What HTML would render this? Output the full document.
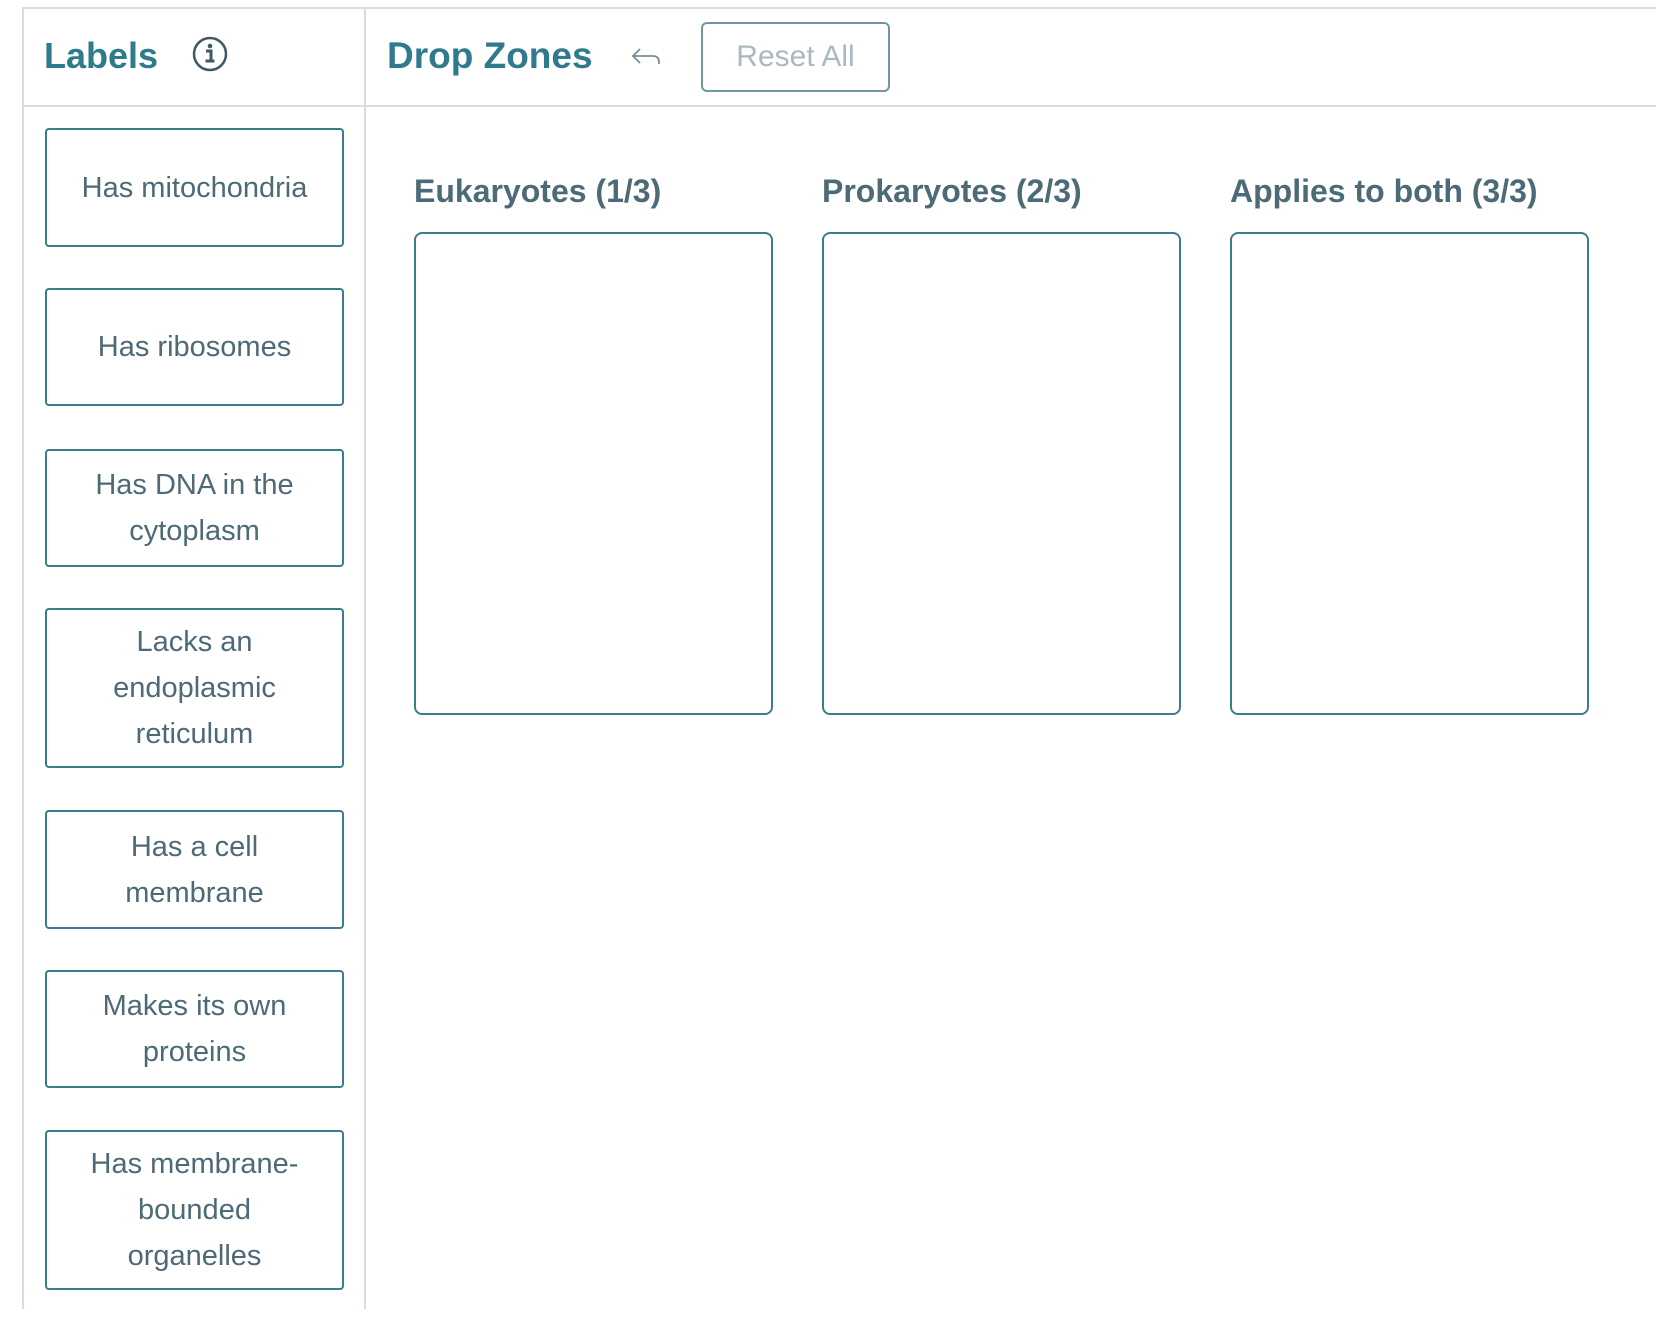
<!DOCTYPE html>
<html><head><meta charset="utf-8"><style>
html,body{margin:0;padding:0;background:#fff;width:1656px;height:1340px;overflow:hidden;font-family:"Liberation Sans",sans-serif;}
.abs{position:absolute;box-sizing:border-box;}
.hl{background:#d5dde2;}
.h1{color:#2f7a8c;font-weight:bold;}
.lab{border:2px solid #3a7d8c;border-radius:4px;color:#4d6a77;font-size:29px;line-height:46px;text-align:center;display:flex;align-items:center;justify-content:center;left:45px;width:299px;}
.zt{color:#4d6a77;font-weight:bold;font-size:32px;top:172px;white-space:nowrap;}
.zone{border:2px solid #3a7d8c;border-radius:8px;top:232px;height:483px;width:359px;}
</style></head><body>
<div class="abs hl" style="left:23px;top:7px;width:1633px;height:2px"></div>
<div class="abs hl" style="left:23px;top:105px;width:1633px;height:2px"></div>
<div class="abs hl" style="left:22px;top:7px;width:2px;height:1302px"></div>
<div class="abs hl" style="left:364px;top:7px;width:2px;height:1302px"></div>

<div class="abs h1" style="left:44px;top:35px;font-size:36px">Labels</div>
<svg class="abs" style="left:191px;top:35px" width="38" height="38" viewBox="0 0 38 38"><circle cx="19" cy="19" r="16" fill="none" stroke="#3d5866" stroke-width="2.5"/><circle cx="19" cy="11" r="2.3" fill="#3d5866"/><path d="M15 16h5v10h3M14.5 26h9" fill="none" stroke="#3d5866" stroke-width="3"/></svg>

<div class="abs h1" style="left:387px;top:35px;font-size:37px">Drop Zones</div>
<svg class="abs" style="left:630px;top:45px" width="34" height="24" viewBox="0 0 34 24"><path d="M10 4L3 11l7 7M3 11h20c4 0 6 2 6 6v2" fill="none" stroke="#7a8e98" stroke-width="1.8"/></svg>
<div class="abs" style="left:701px;top:22px;width:189px;height:70px;border:2px solid #6f97a2;border-radius:6px;color:#a9b9c0;font-size:30px;text-align:center;line-height:66px">Reset All</div>

<div class="abs lab" style="top:128px;height:119px">Has mitochondria</div>
<div class="abs lab" style="top:288px;height:118px">Has ribosomes</div>
<div class="abs lab" style="top:449px;height:118px">Has DNA in the<br>cytoplasm</div>
<div class="abs lab" style="top:608px;height:160px">Lacks an<br>endoplasmic<br>reticulum</div>
<div class="abs lab" style="top:810px;height:119px">Has a cell<br>membrane</div>
<div class="abs lab" style="top:970px;height:118px">Makes its own<br>proteins</div>
<div class="abs lab" style="top:1130px;height:160px">Has membrane-<br>bounded<br>organelles</div>

<div class="abs zt" style="left:414px;top:173px">Eukaryotes (1/3)</div>
<div class="abs zt" style="left:822px;top:173px">Prokaryotes (2/3)</div>
<div class="abs zt" style="left:1230px;top:173px">Applies to both (3/3)</div>
<div class="abs zone" style="left:414px"></div>
<div class="abs zone" style="left:822px"></div>
<div class="abs zone" style="left:1230px"></div>
</body></html>
